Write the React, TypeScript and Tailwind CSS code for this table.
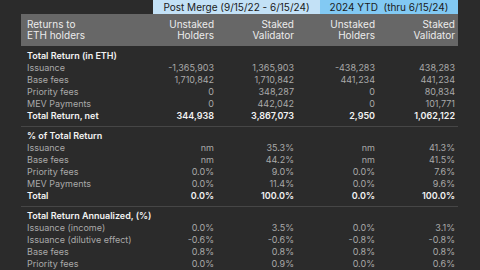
import React from "react";

type Row = { label: string; v: string[]; bold?: boolean };

const sections: { title: string; rows: Row[] }[] = [
  {
    title: "Total Return (in ETH)",
    rows: [
      { label: "Issuance", v: ["-1,365,903", "1,365,903", "-438,283", "438,283"] },
      { label: "Base fees", v: ["1,710,842", "1,710,842", "441,234", "441,234"] },
      { label: "Priority fees", v: ["0", "348,287", "0", "80,834"] },
      { label: "MEV Payments", v: ["0", "442,042", "0", "101,771"] },
      { label: "Total Return, net", v: ["344,938", "3,867,073", "2,950", "1,062,122"], bold: true },
    ],
  },
  {
    title: "% of Total Return",
    rows: [
      { label: "Issuance", v: ["nm", "35.3%", "nm", "41.3%"] },
      { label: "Base fees", v: ["nm", "44.2%", "nm", "41.5%"] },
      { label: "Priority fees", v: ["0.0%", "9.0%", "0.0%", "7.6%"] },
      { label: "MEV Payments", v: ["0.0%", "11.4%", "0.0%", "9.6%"] },
      { label: "Total", v: ["0.0%", "100.0%", "0.0%", "100.0%"], bold: true },
    ],
  },
  {
    title: "Total Return Annualized, (%)",
    rows: [
      { label: "Issuance (income)", v: ["0.0%", "3.5%", "0.0%", "3.1%"] },
      { label: "Issuance (dilutive effect)", v: ["-0.6%", "-0.6%", "-0.8%", "-0.8%"] },
      { label: "Base fees", v: ["0.8%", "0.8%", "0.8%", "0.8%"] },
      { label: "Priority fees", v: ["0.0%", "0.9%", "0.0%", "0.6%"] },
    ],
  },
];

const grid = "grid grid-cols-[1fr_80px_80px_81px_80px]";

export default function App() {
  return (
    <div
      className="w-[480px] h-[270px] overflow-hidden bg-[#2b2b2b] text-[9px]"
      style={{ fontFamily: "Inter, 'Liberation Sans', sans-serif" }}
    >
      <div className="flex h-[14px] text-[10px] leading-[14px] text-[#1a1a1a]">
        <div className="w-[153px]" />
        <div className="w-[167px] bg-[#c3e1f6] text-center">Post Merge (9/15/22 - 6/15/24)</div>
        <div className="w-[138px] bg-[#82c9f3] text-center">2024 YTD&nbsp; (thru 6/15/24)</div>
      </div>
      <div className="w-[437px] ml-[21px]">
        <div className={`${grid} h-[32px] bg-[#676767] pl-[6px] pr-[3px] items-center text-[10px] leading-[11px] text-[#ececec]`}>
          <div>Returns to<br />ETH holders</div>
          <div className="text-right">Unstaked<br />Holders</div>
          <div className="text-right">Staked<br />Validator</div>
          <div className="text-right">Unstaked<br />Holders</div>
          <div className="text-right">Staked<br />Validator</div>
        </div>
        {sections.map((s, si) => (
          <div key={si} className={si === 0 ? "pt-[4px]" : "pt-[3px]"}>
            <div className="h-[12px] leading-[12px] pl-[6px] font-semibold text-[#f2f2f2]">{s.title}</div>
            {s.rows.map((r, ri) => (
              <div
                key={ri}
                className={`${grid} h-[12px] leading-[12px] pl-[6px] pr-[3px] ${
                  r.bold ? "font-semibold text-[#f2f2f2]" : "text-[#a9a9a9]"
                }`}
              >
                <div>{r.label}</div>
                {r.v.map((x, xi) => (
                  <div key={xi} className="text-right">{x}</div>
                ))}
              </div>
            ))}
            {si < 2 && <div className="mt-[4px] h-px bg-[#464646]" />}
          </div>
        ))}
      </div>
    </div>
  );
}
